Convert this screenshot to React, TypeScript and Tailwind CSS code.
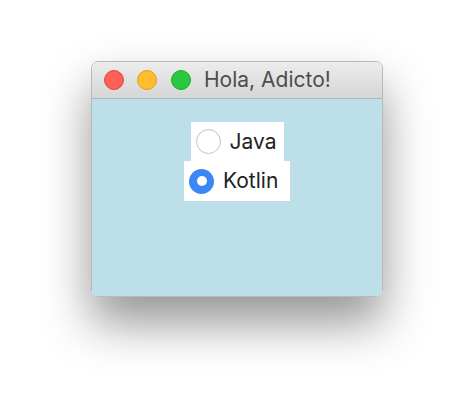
import React from "react";

const Radio: React.FC<{ checked?: boolean }> = ({ checked }) =>
  checked ? (
    <span className="flex h-[25px] w-[25px] shrink-0 items-center justify-center rounded-full bg-[#3b87f5]">
      <span className="h-[10px] w-[10px] rounded-full bg-white" />
    </span>
  ) : (
    <span className="h-[25px] w-[25px] shrink-0 rounded-full border border-[#c4c4c4] bg-white shadow-[inset_0_1px_1px_rgba(0,0,0,0.05)]" />
  );

export default function App() {
  return (
    <div className="h-[418px] w-[474px] bg-white pl-[91px] pt-[61px] font-['Inter','Noto_Sans',sans-serif]">
      {/* Window */}
      <div className="flex h-[236px] w-[292px] flex-col overflow-hidden rounded-[7px] border border-[#b9b9b9] shadow-[0_26px_48px_rgba(0,0,0,0.42)]">
        {/* Title bar */}
        <div className="flex h-[37px] shrink-0 items-center border-b border-[#b5b5b5] bg-gradient-to-b from-[#ececec] to-[#d6d6d6] pl-[12px]">
          <span className="h-[20px] w-[20px] rounded-full border border-[#e2463f] bg-[#fe5f57]" />
          <span className="ml-[13px] h-[20px] w-[20px] rounded-full border border-[#e1a116] bg-[#febc2e]" />
          <span className="ml-[14px] h-[20px] w-[20px] rounded-full border border-[#1aab29] bg-[#28c840]" />
          <span className="ml-[13px] text-[21px] text-[#4d4d4d]">Hola, Adicto!</span>
        </div>
        {/* Content */}
        <div className="flex flex-1 flex-col items-center bg-[#bcdfea] pt-[23px]">
          <div className="flex h-[39px] w-[93px] items-center gap-[9px] bg-white pl-[5px]">
            <Radio />
            <span className="text-[21px] text-[#222]">Java</span>
          </div>
          <div className="flex h-[40px] w-[106px] items-center gap-[9px] bg-white pl-[5px]">
            <Radio checked />
            <span className="text-[21px] text-[#222]">Kotlin</span>
          </div>
        </div>
      </div>
    </div>
  );
}
